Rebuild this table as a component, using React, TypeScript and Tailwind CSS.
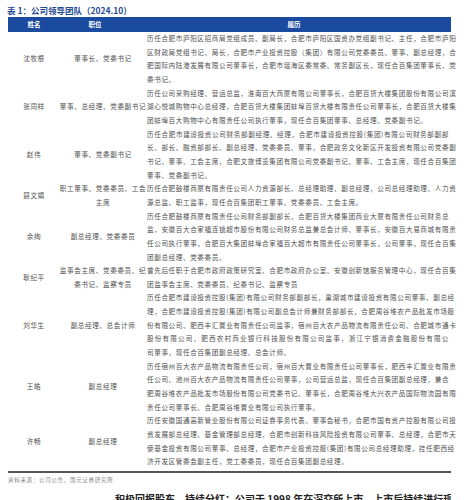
import React from 'react';

interface Leader {
  name: string;
  position: string[];
  resume: string[];
}

const leaders: Leader[] = [
  {
    name: '沈牧根',
    position: ['董事长、党委书记'],
    resume: [
      '历任合肥市庐阳区招商局党组成员、副局长，合肥市庐阳区国资办党组副书记、主任，合肥市庐阳',
      '区财政局党组书记、局长，合肥市产业投资控股（集团）有限公司党委委员、董事、副总经理，合',
      '肥国际内陆港发展有限公司董事长，合肥市瑶海区委常委、常务副区长，现任合百集团董事长、党',
      '委书记。',
    ],
  },
  {
    name: '张同祥',
    position: ['董事、总经理、党委副书记'],
    resume: [
      '历任公司采购经理、营运总监，淮南百大商厦有限公司董事长，合肥百货大楼集团股份有限公司滨',
      '湖心悦城购物中心总经理，合肥百货大楼集团蚌埠百货大楼有限责任公司董事长，合肥百货大楼集',
      '团蚌埠百大购物中心有限责任公司执行董事，现任合百集团董事、总经理、党委副书记。',
    ],
  },
  {
    name: '赵伟',
    position: ['董事、党委副书记'],
    resume: [
      '历任合肥市建设投资公司财务部副经理、经理，合肥市建设投资控股(集团)有限公司财务部副部',
      '长、部长、融资部部长、副总经理、党委委员、董事，合肥政务文化新区开发投资有限公司党委副',
      '书记、董事、工会主席，合肥文旅博览集团有限公司党委副书记、董事、工会主席，现任合百集团',
      '董事、党委副书记。',
    ],
  },
  {
    name: '聂文娟',
    position: ['职工董事、党委委员、工会', '主席'],
    resume: [
      '历任合肥鼓楼商厦有限责任公司人力资源部长、总经理助理、副总经理，公司总经理助理、人力资',
      '源总监、职工监事，现任合百集团职工董事、党委委员、工会主席。',
    ],
  },
  {
    name: '余绚',
    position: ['副总经理、党委委员'],
    resume: [
      '历任合肥鼓楼商厦有限责任公司财务部副部长，合肥百货大楼集团商业大厦有限责任公司财务总',
      '监，安徽百大合家福连锁超市股份有限公司财务总监兼总会计师、董事长，安徽百大易商城有限责',
      '任公司执行董事，合肥百大集团蚌埠合家福百大超市有限责任公司董事长，公司董事，现任合百集',
      '团副总经理、党委委员。',
    ],
  },
  {
    name: '耿纪平',
    position: ['监事会主席、党委委员、纪', '委书记、监察专员'],
    resume: [
      '曾先后任职于合肥市政府政策研究室、合肥市政府办公室、安徽创新馆服务管理中心，现任合百集',
      '团监事会主席、党委委员、纪委书记、监察专员',
    ],
  },
  {
    name: '刘华生',
    position: ['副总经理、总会计师'],
    resume: [
      '历任合肥市建设投资控股(集团)有限公司财务部副部长，巢湖城市建设投资有限公司董事、副总经',
      '理，合肥市建设投资控股(集团)有限公司副总会计师兼财务部部长，合肥周谷堆农产品批发市场股',
      '份有限公司、肥西丰汇置业有限责任公司监事，宿州百大农产品物流有限责任公司、合肥城市通卡',
      '股份有限公司、肥西农村商业银行科技股份有限公司监事，浙江宁银消费金融股份有限公',
      '司董事，现任合百集团副总经理、总会计师。',
    ],
  },
  {
    name: '王皓',
    position: ['副总经理'],
    resume: [
      '历任宿州百大农产品物流有限责任公司，宿州百大置业有限责任公司董事长，肥西丰汇置业有限责',
      '任公司、池州百大农产品物流有限责任公司董事，公司营运总监，现任合百集团副总经理，兼合',
      '肥周谷堆农产品批发市场股份有限公司党委书记、董事长，合肥周谷堆大兴农产品国际物流园有限',
      '责任公司董事长、合肥周谷堆置业有限公司执行董事。',
    ],
  },
  {
    name: '许畅',
    position: ['副总经理'],
    resume: [
      '历任安徽国通高新管业股份有限公司证券事务代表、董事会秘书，合肥市国有资产控股有限公司投',
      '资发展部总经理、基金管理部总经理，合肥市创新科技风险投资有限公司董事、总经理，合肥市天',
      '使基金投资有限公司董事、总经理，合肥市产业投资控股(集团)有限公司总经理助理，挂任肥西经',
      '济开发区管委会副主任，党工委委员，现任合百集团副总经理。',
    ],
  },
];

const cjk = { fontFamily: '"Noto Sans CJK SC", "Noto Sans", sans-serif' };

export default function App() {
  return (
    <div className="w-[474px] h-[500px] overflow-hidden bg-white text-[#505050]" style={cjk}>
      {/* Title */}
      <div className="h-[17px] pl-[7px] pt-[3px] flex items-center text-[8.5px] font-bold text-[#1f4a94] leading-none">
        表 1：公司领导团队（2024.10）
      </div>

      <div className="ml-[8px] w-[443px]">
        {/* Header */}
        <div className="grid grid-cols-[52px_86px_305px] h-[15px] bg-[#1a4b9e] text-white text-[6.5px] font-bold items-center">
          <div className="text-center">姓名</div>
          <div className="text-center pr-[16px]">职位</div>
          <div className="text-center pr-[9px]">履历</div>
        </div>

        {/* Rows */}
        <div className="border-b-2 border-[#555] pb-[2px]">
          {leaders.map((p) => (
            <div key={p.name} className="grid grid-cols-[52px_86px_305px] text-[6.6px] leading-[13.65px] tracking-[0.6px]">
              <div className="flex items-center justify-center">{p.name}</div>
              <div className="flex flex-col items-center justify-center whitespace-nowrap">
                {p.position.map((l) => (
                  <div key={l}>{l}</div>
                ))}
              </div>
              <div className="pl-[1px] pr-[2px]">
                {p.resume.map((l, i) => (
                  <div
                    key={i}
                    className={
                      i < p.resume.length - 1
                        ? 'whitespace-nowrap text-justify [text-align-last:justify]'
                        : 'whitespace-nowrap'
                    }
                  >
                    {l}
                  </div>
                ))}
              </div>
            </div>
          ))}
        </div>

        {/* Source */}
        <div className="mt-[5px] text-[5.5px] tracking-[0.7px] text-[#888] leading-none">
          资料来源：公司公告，国元证券研究所
        </div>
      </div>

      {/* Following paragraph, cut off by page edge */}
      <div className="mt-[9px] ml-[115px] w-[336px] overflow-hidden whitespace-nowrap text-[10px] font-bold text-[#222] leading-[12px]">
        积极回报股东，持续分红：公司于 1998 年在深交所上市，上市后持续进行现金分红
      </div>
    </div>
  );
}
